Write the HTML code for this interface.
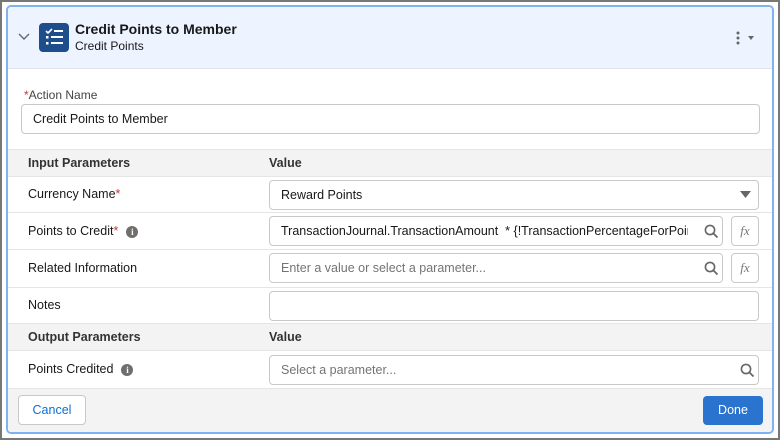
<!DOCTYPE html>
<html><head><style>
*{box-sizing:border-box;margin:0;padding:0}
body{width:780px;height:440px;background:#fff;font-family:"Liberation Sans",sans-serif;font-size:12.5px;color:#181818;position:relative;overflow:hidden}
.frame{position:absolute;inset:0;border:2px solid #777}
.card{position:absolute;left:6px;top:5px;width:768px;height:429px;border:2px solid #7fb3f0;border-radius:5px;overflow:hidden;background:#fff}
.hdr{position:absolute;left:0;top:0;right:0;height:62px;background:#eef4ff;border-bottom:1px solid #e0e4ea}
.abs{position:absolute}
.inp{position:absolute;border:1px solid #c9c9c9;border-radius:4px;background:#fff;height:30px;padding-left:11px;line-height:28px;white-space:nowrap;overflow:hidden}
.inp span{display:block;overflow:hidden}
.row{position:absolute;left:0;right:0;border-top:1px solid #e5e5e5}
.lbl{position:absolute;left:20px}
.th{background:#f3f3f3;font-weight:bold;color:#333}
.fx{position:absolute;width:28px;height:30px;border:1px solid #c9c9c9;border-radius:4px;font-family:"Liberation Serif",serif;font-style:italic;color:#777;text-align:center;line-height:28px;font-size:13px;background:#fff}
.info{display:inline-block;width:12px;height:12px;border-radius:50%;background:#706e6b;color:#fff;font-size:9px;font-weight:bold;text-align:center;line-height:12px;vertical-align:middle;margin-left:8px;font-family:"Liberation Serif",serif}
.req{color:#c23934}
svg.s{position:absolute}
</style></head><body>
<div class="frame"></div>
<div class="card">
 <div class="hdr">
  <svg class="abs" style="left:10px;top:26px" width="12" height="8" viewBox="0 0 12 8"><path d="M1 1l5 5 5-5" fill="none" stroke="#666" stroke-width="1.4"/></svg>
  <div class="abs" style="left:31px;top:16px;width:30px;height:29px;background:#1e4d8c;border-radius:4px">
   <svg width="30" height="29" viewBox="0 0 30 29"><path d="M7 8l2 2 4-4" fill="none" stroke="#fff" stroke-width="1.6"/><rect x="15" y="7" width="9" height="2" fill="#fff"/><rect x="7" y="13" width="2.5" height="2.5" fill="#fff"/><rect x="12" y="13" width="12" height="2" fill="#fff"/><rect x="7" y="19" width="2.5" height="2.5" fill="#fff"/><rect x="12" y="19" width="12" height="2" fill="#fff"/></svg>
  </div>
  <div class="abs" style="left:67px;top:14px;font-weight:bold;font-size:14px">Credit Points to Member</div>
  <div class="abs" style="left:67px;top:32px;font-size:12px">Credit Points</div>
  <svg class="abs" style="left:726px;top:24px" width="24" height="14"><circle cx="4" cy="2" r="1.5" fill="#666"/><circle cx="4" cy="7" r="1.5" fill="#666"/><circle cx="4" cy="12" r="1.5" fill="#666"/><path d="M14 5h6l-3 4z" fill="#666"/></svg>
 </div>
 <div class="abs" style="left:16px;top:81px;font-size:12px;color:#444"><span class="req">*</span>Action Name</div>
 <div class="inp" style="left:13px;top:97px;width:739px">Credit Points to Member</div>

 <div class="row th" style="top:142px;height:27px"><div class="lbl" style="top:6px">Input Parameters</div><div class="abs" style="left:261px;top:6px">Value</div></div>
 <div class="row" style="top:169px;height:36px"><div class="lbl" style="top:10px">Currency Name<span class="req">*</span></div>
  <div class="inp" style="left:261px;top:3px;width:490px">Reward Points</div>
  <svg class="s" style="left:732px;top:14px" width="12" height="8"><path d="M0 0h11l-5.5 7z" fill="#666"/></svg></div>
 <div class="row" style="top:205px;height:37px"><div class="lbl" style="top:11px">Points to Credit<span class="req">*</span><span class="info">i</span></div>
  <div class="inp" style="left:261px;top:3px;width:454px;padding-right:34px"><span>TransactionJournal.TransactionAmount&nbsp; * {!TransactionPercentageForPoints}</span></div>
  <svg class="s" style="left:696px;top:11px" width="15" height="15"><circle cx="6" cy="6" r="4.6" fill="none" stroke="#666" stroke-width="1.6"/><path d="M9.5 9.5l4 4" stroke="#666" stroke-width="1.8"/></svg>
  <div class="fx" style="left:723px;top:3px">fx</div></div>
 <div class="row" style="top:242px;height:38px"><div class="lbl" style="top:11px">Related Information</div>
  <div class="inp" style="left:261px;top:3px;width:454px;color:#747474">Enter a value or select a parameter...</div>
  <svg class="s" style="left:696px;top:11px" width="15" height="15"><circle cx="6" cy="6" r="4.6" fill="none" stroke="#666" stroke-width="1.6"/><path d="M9.5 9.5l4 4" stroke="#666" stroke-width="1.8"/></svg>
  <div class="fx" style="left:723px;top:3px">fx</div></div>
 <div class="row" style="top:280px;height:36px"><div class="lbl" style="top:10px">Notes</div>
  <div class="inp" style="left:261px;top:3px;width:490px"></div></div>
 <div class="row th" style="top:316px;height:27px"><div class="lbl" style="top:6px">Output Parameters</div><div class="abs" style="left:261px;top:6px">Value</div></div>
 <div class="row" style="top:343px;height:38px"><div class="lbl" style="top:11px">Points Credited<span class="info">i</span></div>
  <div class="inp" style="left:261px;top:4px;width:490px;color:#747474">Select a parameter...</div>
  <svg class="s" style="left:732px;top:12px" width="15" height="15"><circle cx="6" cy="6" r="4.6" fill="none" stroke="#666" stroke-width="1.6"/><path d="M9.5 9.5l4 4" stroke="#666" stroke-width="1.8"/></svg></div>
 <div class="row" style="top:381px;height:50px;background:#f3f3f3">
  <div class="abs" style="left:10px;top:6px;width:68px;height:30px;border:1px solid #c9c9c9;border-radius:4px;background:#fff;color:#0b6fd6;text-align:center;line-height:28px">Cancel</div>
  <div class="abs" style="left:695px;top:7px;width:60px;height:29px;border-radius:4px;background:#2a74d0;color:#fff;text-align:center;line-height:29px">Done</div>
 </div>
</div>
</body></html>
